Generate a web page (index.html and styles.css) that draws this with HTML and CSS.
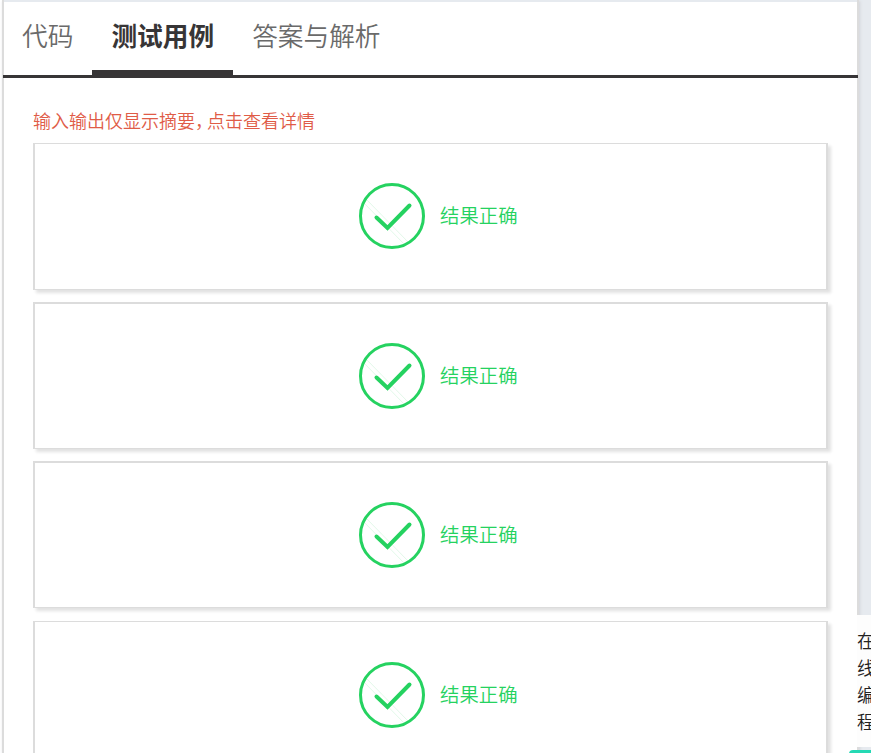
FILE: index.html
```
<!DOCTYPE html>
<html lang="zh-CN">

<head>
    <meta charset="UTF-8">
    <title>测试用例</title>
    <link rel="stylesheet" href="styles.css">
</head>

<body>
    <svg class="symbols">
        <symbol id="check" viewBox="0 0 66 66">
            <path class="trace" d="M4 19 L46 62 M6 15 L50 60" />
            <circle cx="33" cy="33" r="31.5" />
            <path class="tick" d="M17.5 34.5 L28.5 45 L50.5 22.5" />
        </symbol>
    </svg>

    <main class="panel">
        <nav class="tabs">
            <a class="tab">代码</a>
            <a class="tab active">测试用例</a>
            <a class="tab">答案与解析</a>
        </nav>

        <div class="content">
            <p class="tip">输入输出仅显示摘要<span class="comma">，</span>点击查看详情</p>
            <div class="case">
                <svg class="icon"><use href="#check" /></svg>
                <span class="result">结果正确</span>
            </div>
            <div class="case thick">
                <svg class="icon"><use href="#check" /></svg>
                <span class="result">结果正确</span>
            </div>
            <div class="case thick">
                <svg class="icon"><use href="#check" /></svg>
                <span class="result">结果正确</span>
            </div>
            <div class="case last">
                <svg class="icon"><use href="#check" /></svg>
                <span class="result">结果正确</span>
            </div>
        </div>
    </main>

    <aside class="side">在线编程</aside>
    <div class="side-button"></div>
</body>

</html>
```

FILE: styles.css
```
* {
    box-sizing: border-box;
}

body {
    margin: 0;
    height: 753px;
    overflow: hidden;
    position: relative;
    background: linear-gradient(to right, #fff 2px, #e6eaef 2px);
    font-family: "Noto Sans CJK SC", sans-serif;
}

.symbols {
    position: absolute;
    width: 0;
    height: 0;
}

.panel {
    width: 857px;
    height: 753px;
    margin-left: 2px;
    padding-top: 2px;
    border-left: 2px solid #dcdcdc;
    border-right: 2px solid #dcdcdc;
    background: linear-gradient(#e6eaef 2px, #fff 2px);
    box-shadow: 1px 1px 3px #d2d4d9;
}

.tabs {
    display: flex;
    height: 76px;
    margin: 0 -1px;
    border-bottom: 3px solid #373536;
}

.tab {
    height: 73px;
    padding: 0 19px;
    border-bottom: 5px solid transparent;
    color: #6a6a6a;
    font-size: 25.7px;
    font-weight: 350;
    line-height: 65px;
}

.tab.active {
    border-color: #373536;
    color: #373536;
    font-weight: bold;
}

.content {
    padding: 31px 29px 0;
}

.tip {
    height: 34px;
    margin: 0;
    color: #e05c47;
    font-size: 18px;
    font-weight: 350;
    line-height: 22px;
}

.comma {
    letter-spacing: -6px;
}

.case {
    display: flex;
    align-items: flex-start;
    gap: 15px;
    width: 795px;
    height: 147px;
    margin-bottom: 12px;
    padding: 39px 0 0 324px;
    border: 2px solid #dcdcdc;
    border-width: 1px 2px;
    box-shadow: 3px 3px 3px #e2e2e2;
    color: #25d260;
}

.case.thick {
    border-top-width: 2px;
}

.case.last {
    margin-top: 13px;
    padding-top: 40px;
}

.icon {
    width: 66px;
    height: 66px;
    fill: none;
    stroke: #25d260;
    stroke-width: 3;
}

.result {
    font-size: 19.4px;
    font-weight: 350;
    line-height: 63px;
}

.tick {
    stroke-width: 4;
    stroke-linecap: round;
}

.trace {
    stroke: #d5f5df;
    stroke-width: 0.7;
}

.side {
    position: absolute;
    left: 857px;
    top: 615px;
    width: 18px;
    height: 132px;
    padding-top: 12px;
    background: #fdfdfd;
    color: #222;
    font-size: 18px;
    font-weight: 350;
    line-height: 27px;
    word-break: break-all;
}

.side-button {
    position: absolute;
    left: 849px;
    top: 750px;
    width: 40px;
    height: 20px;
    border-radius: 4px;
    background: #25d9b4;
}
```
